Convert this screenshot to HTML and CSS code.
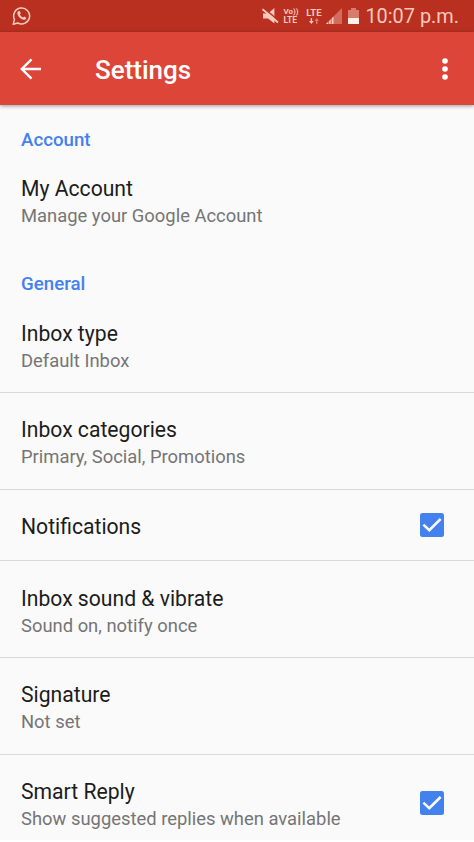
FILE: index.html
```html
<!DOCTYPE html>
<html lang="en">
<head>
<meta charset="utf-8">
<title>Settings</title>
<link rel="stylesheet" href="styles.css">
</head>
<body>
<div class="screen">
  <div class="status">
    <svg class="whatsapp" width="20" height="20" viewBox="0 0 20 20" fill="none" stroke="currentColor">
      <path d="M1.2 18.2 2.5 13.6A8 8 0 1 1 5.8 17Z" stroke-width="1.5" stroke-linejoin="round"/>
      <path d="M6.2 5.2 7.7 5 8.8 7.3 7.9 8.6C8.5 10 9.6 11 11 11.6L12.2 10.6 14.2 11.7C14.3 13.3 13 14 11.8 13.8 8.6 13.3 5.9 10.5 5.4 7.8 5.2 6.7 5.5 5.8 6.2 5.2Z" fill="currentColor" stroke="none"/>
    </svg>
    <div class="indicators">
      <svg class="mute" width="17" height="16" viewBox="0 0 17 16">
        <path d="M1 5.5H6L12.4 0V15.5L6 10.5H1Z" fill="currentColor"/>
        <path d="M1.5 0 17 13" stroke="#b93021" stroke-width="1.6"/>
        <path d="M0.5 1.2 16 14.4" stroke="currentColor" stroke-width="2"/>
      </svg>
      <div class="volte"><span>Vo))</span><span>LTE</span></div>
      <div class="lte"><span>LTE</span>
        <svg width="10" height="6" viewBox="0 0 10 6"><path d="M1.7 0H3.1V3H4.7L2.4 6 0 3H1.7Z" fill="currentColor"/><path d="M7 6V3H5.5L7.7 0 10 3H8.4V6Z" fill="currentColor" opacity=".5"/></svg>
      </div>
      <svg class="signal" width="16" height="16" viewBox="0 0 16 16" fill="currentColor">
        <path d="M0 16 16 0V16Z" opacity=".4"/><path d="M0 16 7.5 8.5V16Z"/><path d="M2.7 12V16M5.2 10V16" stroke="#b93021" stroke-width=".7"/>
      </svg>
      <svg class="battery" width="11" height="16" viewBox="0 0 11 16" fill="currentColor">
        <path d="M3 0H8V2H11V10H0V2H3Z" opacity=".5"/><path d="M0 10H11V16H0Z" fill="#fff0e8"/>
      </svg>
      <span class="clock">10:07 p.m.</span>
    </div>
  </div>
  <header class="toolbar">
    <svg class="back" width="22" height="22" viewBox="0 0 22 22" fill="none" stroke="#fff" stroke-width="2.4"><path d="M21 11H2M11.5 1.3 1.8 11 11.5 20.7"/></svg>
    <h1>Settings</h1>
    <svg class="more" width="6" height="22" viewBox="0 0 6 22" fill="#fff"><circle cx="3" cy="3" r="2.8"/><circle cx="3" cy="11" r="2.8"/><circle cx="3" cy="19" r="2.8"/></svg>
  </header>
  <main>
    <h2>Account</h2>
    <div class="row account"><div><div class="title">My Account</div><div class="sub">Manage your Google Account</div></div></div>
    <h2 class="general">General</h2>
    <div class="row"><div><div class="title">Inbox type</div><div class="sub">Default Inbox</div></div></div>
    <div class="row"><div><div class="title">Inbox categories</div><div class="sub">Primary, Social, Promotions</div></div></div>
    <div class="row single"><div class="title">Notifications</div>
      <svg class="check" width="24" height="24" viewBox="0 0 24 24"><rect width="24" height="24" rx="2.5" fill="#4381ef"/><path d="M3.4 11.7 9.3 17.2 20.6 6" fill="none" stroke="#fff" stroke-width="2.5"/></svg></div>
    <div class="row"><div><div class="title">Inbox sound &amp; vibrate</div><div class="sub">Sound on, notify once</div></div></div>
    <div class="row"><div><div class="title">Signature</div><div class="sub">Not set</div></div></div>
    <div class="row last"><div><div class="title">Smart Reply</div><div class="sub">Show suggested replies when available</div></div>
      <svg class="check" width="24" height="24" viewBox="0 0 24 24"><rect width="24" height="24" rx="2.5" fill="#4381ef"/><path d="M3.4 11.7 9.3 17.2 20.6 6" fill="none" stroke="#fff" stroke-width="2.5"/></svg></div>
  </main>
</div>
</body>
</html>
```
FILE: styles.css
```css
* { box-sizing: border-box; }
body { margin: 0; background: #fff; font-family: Roboto, "Liberation Sans", sans-serif; }
.screen { height: 840px; overflow: hidden; background: #fafafa; }
.status { display: flex; justify-content: space-between; height: 32px; padding: 0 15px 0 12px; background: #b93021; color: #f7cabb; }
.whatsapp { margin-top: 6px; }
.indicators { display: flex; align-items: flex-start; }
.mute { margin-top: 8px; }
.volte { display: flex; flex-direction: column; width: 16px; margin: 8px 0 0 4px; font-size: 8.5px; line-height: 9px; font-weight: 700; white-space: nowrap; }
.volte span:first-child { font-size: 8px; line-height: 8px; }
.lte { display: flex; flex-direction: column; align-items: center; width: 17px; margin: 8px 0 0 6px; font-size: 9.5px; line-height: 9px; font-weight: 700; }
.lte svg { margin-top: 1px; }
.signal { margin: 8px 0 0 4px; }
.battery { margin: 8px 0 0 6px; }
.clock { margin-left: 6px; font-size: 19.9px; line-height: 33px; white-space: nowrap; }
.toolbar { position: relative; display: flex; align-items: center; height: 73px; padding: 0 26px 0 20px; background: #dc4538; box-shadow: 0 1px 4px rgba(0,0,0,.4); color: #fff; }
h1 { flex: 1; margin: 2px 0 0 53px; font-size: 26px; line-height: 32px; font-weight: 500; }
h2 { margin: 0; height: 59px; padding: 23px 21px 0; font-size: 18.7px; line-height: 24px; font-weight: 500; color: #4381ef; }
h2.general { padding-top: 22px; }
.row { display: flex; align-items: flex-start; justify-content: space-between; height: 96.7px; padding: 23.4px 30px 0 21px; border-bottom: 1px solid #dadada; }
.row.account { height: 86px; padding-top: 11.4px; border-bottom: 0; }
h2.general + .row { height: 84px; padding-top: 10.5px; }
.row.last { border-bottom: 0; }
.row.single { height: 71.7px; padding-top: 23px; }
.title { font-size: 21.15px; line-height: 27px; color: #1c1c1c; white-space: nowrap; }
.sub { font-size: 18.4px; line-height: 27px; color: #757575; white-space: nowrap; }
.last .check { margin-top: 13px; }
```
